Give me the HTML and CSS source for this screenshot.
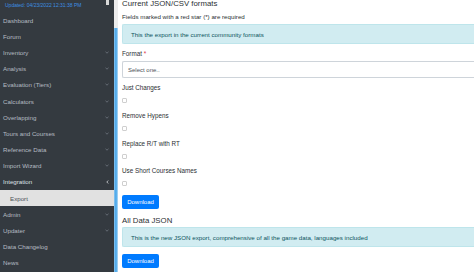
FILE: index.html
```html
<!DOCTYPE html>
<html lang="en">
<head>
    <meta charset="UTF-8">
    <meta name="viewport" content="width=device-width, initial-scale=1.0">
    <title>Export</title>
    <link rel="stylesheet" href="styles.css">
</head>
<body>
    <div class="wrapper">
        <aside class="sidebar">
            <div class="updated">
                <span>Updated: 04/23/2022 12:31:38 PM</span>
                <span class="thumb"></span>
            </div>
            <div class="nav-item">Dashboard</div>
            <div class="nav-item">Forum</div>
            <div class="nav-item">Inventory <svg class="chev" viewBox="0 0 4 3"><path d="M0.5 0.8 L2 2.2 L3.5 0.8"/></svg></div>
            <div class="nav-item">Analysis <svg class="chev" viewBox="0 0 4 3"><path d="M0.5 0.8 L2 2.2 L3.5 0.8"/></svg></div>
            <div class="nav-item">Evaluation (Tiers) <svg class="chev" viewBox="0 0 4 3"><path d="M0.5 0.8 L2 2.2 L3.5 0.8"/></svg></div>
            <div class="nav-item">Calculators <svg class="chev" viewBox="0 0 4 3"><path d="M0.5 0.8 L2 2.2 L3.5 0.8"/></svg></div>
            <div class="nav-item">Overlapping <svg class="chev" viewBox="0 0 4 3"><path d="M0.5 0.8 L2 2.2 L3.5 0.8"/></svg></div>
            <div class="nav-item">Tours and Courses <svg class="chev" viewBox="0 0 4 3"><path d="M0.5 0.8 L2 2.2 L3.5 0.8"/></svg></div>
            <div class="nav-item">Reference Data <svg class="chev" viewBox="0 0 4 3"><path d="M0.5 0.8 L2 2.2 L3.5 0.8"/></svg></div>
            <div class="nav-item">Import Wizard <svg class="chev" viewBox="0 0 4 3"><path d="M0.5 0.8 L2 2.2 L3.5 0.8"/></svg></div>
            <div class="nav-item open">Integration <svg class="chev-left" viewBox="0 0 3 4"><path d="M2.2 0.5 L0.8 2 L2.2 3.5"/></svg></div>
            <div class="nav-item sub active">Export</div>
            <div class="nav-item">Admin <svg class="chev" viewBox="0 0 4 3"><path d="M0.5 0.8 L2 2.2 L3.5 0.8"/></svg></div>
            <div class="nav-item">Updater <svg class="chev" viewBox="0 0 4 3"><path d="M0.5 0.8 L2 2.2 L3.5 0.8"/></svg></div>
            <div class="nav-item">Data Changelog</div>
            <div class="nav-item">News</div>
        </aside>
        <div class="edge">
            <div class="edge-top"></div>
            <div class="edge-line"></div>
        </div>
        <main class="content">
            <h3 class="title">Current JSON/CSV formats</h3>
            <p class="note">Fields marked with a red star (*) are required</p>
            <div class="alert">This the export in the current community formats</div>

            <label class="label label-format">Format <span class="star">*</span></label>
            <div class="select">Select one..</div>

            <div class="groups">
                <div class="group">
                    <div class="label">Just Changes</div>
                    <span class="check"></span>
                </div>
                <div class="group">
                    <div class="label">Remove Hypens</div>
                    <span class="check"></span>
                </div>
                <div class="group">
                    <div class="label">Replace R/T with RT</div>
                    <span class="check"></span>
                </div>
                <div class="group">
                    <div class="label">Use Short Courses Names</div>
                    <span class="check"></span>
                </div>
            </div>
            <button class="btn">Download</button>

            <h3 class="title title-all">All Data JSON</h3>
            <div class="alert alert-all">This is the new JSON export, comprehensive of all the game data, languages included</div>
            <button class="btn btn-all">Download</button>
        </main>
    </div>
</body>
</html>
```

FILE: styles.css
```css
body {
    margin: 0;
    padding: 0;
    background-color: #ffffff;
    font-family: "Liberation Sans", Arial, sans-serif;
    overflow: hidden;
}
.wrapper {
    display: flex;
    height: 272px;
}

/* sidebar */
.sidebar {
    width: 114px;
    flex: none;
    background-color: #343a40;
    color: #b4bac2;
}
.updated {
    height: 12px;
    display: flex;
    justify-content: space-between;
    align-items: flex-start;
    padding-left: 5px;
    font-size: 5px;
    line-height: 11px;
    color: #3d8fe0;
}
.thumb {
    width: 3px;
    height: 5px;
    margin-right: 5px;
    background-color: #d8d8d8;
}
.nav-item {
    height: 16.2px;
    display: flex;
    justify-content: space-between;
    align-items: center;
    padding: 0 5px 0 3px;
    font-size: 6.2px;
}
.nav-item.open {
    color: #dde1e5;
}
.nav-item.sub {
    padding-left: 10px;
}
.nav-item.active {
    background-color: #e1e1e1;
    color: #4a5057;
}
.chev {
    width: 4px;
    height: 3px;
    fill: none;
    stroke: #7d848c;
    stroke-width: 0.7;
}
.chev-left {
    width: 3px;
    height: 4px;
    fill: none;
    stroke: #dde1e5;
    stroke-width: 0.8;
}

/* edge between sidebar and page */
.edge {
    width: 4px;
    flex: none;
    display: flex;
    flex-direction: column;
}
.edge-top {
    height: 28px;
    background-color: #ececec;
}
.edge-line {
    flex: 1;
    background: linear-gradient(to right, #8fc6ee, #3ea2ea 50%, #b9dcf5);
}

/* content */
.content {
    flex: 1;
    min-width: 0;
    padding-left: 4px;
    color: #2b2f33;
}
.title {
    margin: -1px 0 0;
    font-size: 7.8px;
    line-height: 10px;
    font-weight: normal;
}
.note {
    margin: 3px 0 0;
    font-size: 6.2px;
    line-height: 10px;
}
.alert {
    margin-top: 2px;
    height: 20px;
    display: flex;
    align-items: center;
    padding: 0 8px;
    box-sizing: border-box;
    background-color: #d1ecf1;
    border: 1px solid #bee5eb;
    border-right: none;
    border-radius: 2px 0 0 2px;
    color: #0c5460;
    font-size: 6.2px;
}
.label {
    display: block;
    font-size: 6.3px;
    line-height: 8px;
}
.label-format {
    margin-top: 6px;
}
.star {
    color: #dc3545;
}
.select {
    margin-top: 3px;
    height: 17px;
    display: flex;
    align-items: center;
    padding-left: 5px;
    box-sizing: border-box;
    border: 1px solid #ced4da;
    border-right: none;
    border-radius: 2px 0 0 2px;
    color: #495057;
    font-size: 6px;
}
.groups {
    margin-top: 6px;
}
.group {
    height: 27.8px;
}
.check {
    display: block;
    margin-top: 6px;
    width: 5px;
    height: 5px;
    box-sizing: border-box;
    border: 1px solid #cfcfcf;
    border-radius: 1px;
}
.btn {
    display: block;
    width: 37px;
    height: 14px;
    padding: 0;
    border: none;
    border-radius: 2px;
    background-color: #007bff;
    color: #ffffff;
    font-family: "Liberation Sans", Arial, sans-serif;
    font-size: 6px;
}
.title-all {
    margin-top: 6.7px;
}
.alert-all {
    margin-top: 1.3px;
}
.btn-all {
    margin-top: 7px;
}
```
